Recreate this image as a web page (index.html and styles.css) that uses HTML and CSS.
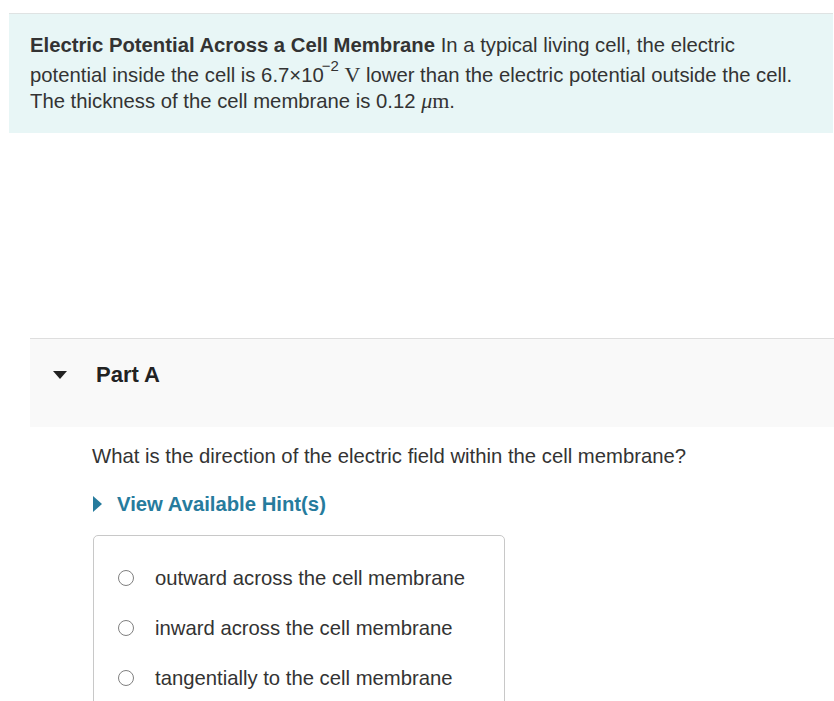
FILE: index.html
```html
<!DOCTYPE html>
<html>
<head>
<meta charset="utf-8">
<link rel="stylesheet" href="styles.css">
</head>
<body>
<div class="page">
  <div class="intro">
    <p><strong>Electric Potential Across a Cell Membrane</strong> In a typical living cell, the electric potential inside the cell is 6.7×10<sup>−2</sup> <span class="math">V</span> lower than the electric potential outside the cell. The thickness of the cell membrane is 0.12 <span class="math"><i>μ</i>m</span>.</p>
  </div>
  <div class="part">
    <div class="part-head">
      <span class="caret-down"></span>
      <span class="part-title">Part A</span>
    </div>
    <div class="part-body">
      <p class="question">What is the direction of the electric field within the cell membrane?</p>
      <div class="hint"><span class="caret-right"></span><span>View Available Hint(s)</span></div>
      <div class="options">
        <label class="opt"><span class="radio"></span>outward across the cell membrane</label>
        <label class="opt"><span class="radio"></span>inward across the cell membrane</label>
        <label class="opt"><span class="radio"></span>tangentially to the cell membrane</label>
      </div>
    </div>
  </div>
</div>
</body>
</html>
```
FILE: styles.css
```css
html, body {
  margin: 0;
  padding: 0;
  background: #fff;
}
body {
  font-family: "Liberation Sans", Arial, sans-serif;
  color: #333;
  font-size: 20.3px;
  overflow: hidden;
}
.page {
  padding-top: 13px;
}
.intro {
  margin-left: 9px;
  margin-right: 1px;
  background: #e8f6f6;
  border-top: 1px solid #dfe3e3;
  padding: 19px 28px 21px 21px;
  height: 79px;
}
.intro p {
  margin: 0;
  line-height: 25px;
}
.intro strong {
  font-weight: bold;
}
.intro sup {
  font-size: 15px;
  line-height: 16px;
  vertical-align: 11px;
  margin-left: -2px;
}
.math {
  font-family: "Liberation Serif", "Times New Roman", serif;
  font-size: 22px;
}
.math i {
  font-style: italic;
}
.part {
  margin-top: 205px;
  margin-left: 30px;
}
.part-head {
  background: #f9f9f9;
  border-top: 1px solid #dedede;
  height: 65px;
  padding-top: 23px;
  display: flex;
  align-items: flex-start;
}
.caret-down {
  width: 0;
  height: 0;
  border-left: 7px solid transparent;
  border-right: 7px solid transparent;
  border-top: 8px solid #222;
  margin-left: 23px;
  margin-top: 9px;
}
.part-title {
  font-weight: bold;
  font-size: 22px;
  line-height: 26px;
  color: #222;
  margin-left: 29px;
}
.part-body {
  padding-left: 62px;
}
.question {
  margin: 17px 0 0 0;
  line-height: 24px;
}
.hint {
  margin-top: 24px;
  display: flex;
  align-items: center;
  color: #267b9d;
  font-weight: bold;
  line-height: 24px;
}
.caret-right {
  width: 0;
  height: 0;
  border-top: 8px solid transparent;
  border-bottom: 8px solid transparent;
  border-left: 9px solid #267b9d;
  margin-left: 1px;
  margin-right: 15px;
}
.options {
  margin-top: 19px;
  margin-left: 1px;
  width: 410px;
  border: 1px solid #c8c8c8;
  border-radius: 5px;
  padding: 30px 0 20px 0;
}
.opt {
  display: flex;
  align-items: center;
  height: 24px;
  margin-bottom: 26px;
  padding-left: 24px;
}
.radio {
  width: 14px;
  height: 14px;
  border: 1px solid #808080;
  border-radius: 50%;
  margin-right: 21px;
  flex: none;
}
```
